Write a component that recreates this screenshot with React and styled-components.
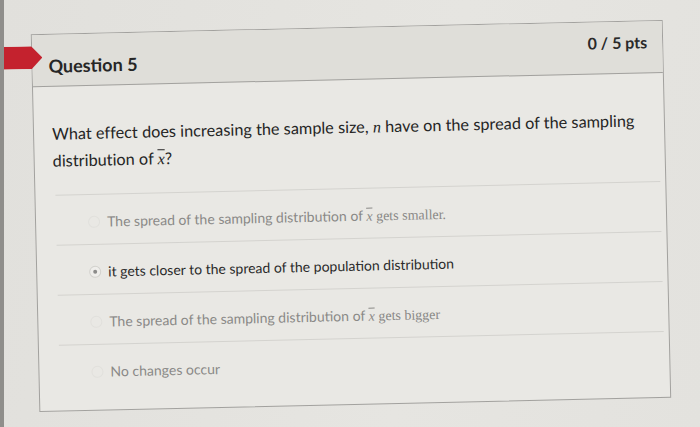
import React from 'react';
import styled, { createGlobalStyle } from 'styled-components';

const GlobalStyle = createGlobalStyle`
    html, body {
        margin: 0;
        padding: 0;
        background: #e3e2de;
        font-family: Lato, "Open Sans", sans-serif;
    }
`

const Screen = styled.div`
    position: relative;
    width: 700px;
    height: 427px;
    box-sizing: border-box;
    border-left: 4px solid #8f8e8b;
    background: linear-gradient(100deg, #e1e0dc 0%, #e6e5e1 60%, #e3e2de 100%);
    overflow: hidden;
    padding: 27px 0 0 31px;
`

const Card = styled.div`
    position: relative;
    width: 632px;
    height: 378px;
    box-sizing: border-box;
    border: 1px solid #a2a19e;
    background: #e9e8e4;
    transform: rotate(-1.3deg);
`

const Header = styled.div`
    display: flex;
    justify-content: space-between;
    align-items: flex-start;
    height: 52px;
    box-sizing: border-box;
    padding: 10px 15px 0 16px;
    background: #dfded9;
    border-bottom: 1px solid #a2a19e;
`

const Tag = styled.div`
    position: absolute;
    left: -44px;
    top: 11px;
    width: 54px;
    height: 23px;
    background: #c4222e;
    clip-path: polygon(0 0, 43px 0, 100% 50%, 43px 100%, 0 100%);
`

const Title = styled.div`
    margin-top: 10px;
    font-size: 18px;
    font-weight: 700;
    color: #262626;
    line-height: 22px;
`

const Points = styled.div`
    font-size: 16px;
    font-weight: 700;
    color: #2a2a2a;
    line-height: 22px;
`

const Body = styled.div`
    padding: 34px 5px 0 18px;
`

const QuestionText = styled.div`
    font-size: 16.2px;
    letter-spacing: 0.05px;
    line-height: 26px;
    color: #252525;
`

const Math = styled.span`
    font-family: "Liberation Serif", serif;
    font-style: ${p => (p.italic ? 'italic' : 'normal')};
`

const Bar = styled.span`
    text-decoration: overline;
    font-family: "Liberation Serif", serif;
    font-style: italic;
`

const AnswerList = styled.div`
    margin: 20px 0 0 2px;
`

const Answer = styled.div`
    display: flex;
    align-items: center;
    height: 50px;
    box-sizing: border-box;
    padding: 4px 0 0 32px;
    border-top: 1px solid #d4d3cf;
    font-size: 14px;
    color: ${p => (p.selected ? '#2a2a2a' : '#8a8987')};
`

const Radio = styled.span`
    position: relative;
    width: 12px;
    height: 12px;
    box-sizing: border-box;
    border-radius: 50%;
    margin-right: 7px;
    flex-shrink: 0;
    border: 1px solid ${p => (p.selected ? '#d2d1cd' : '#e1e0dc')};
    background: ${p => (p.selected ? '#efeeeb' : 'transparent')};

    &::after {
        content: '';
        display: ${p => (p.selected ? 'block' : 'none')};
        position: absolute;
        left: 3px;
        top: 3px;
        width: 4px;
        height: 4px;
        border-radius: 50%;
        background: #8c8c8a;
    }
`

const XBar = () => <Bar>x</Bar>

const answers = [
    { id: 1, text: 'The spread of the sampling distribution of ', math: ' gets smaller.' },
    { id: 2, text: 'it gets closer to the spread of the population distribution', selected: true },
    { id: 3, text: 'The spread of the sampling distribution of ', math: ' gets bigger' },
    { id: 4, text: 'No changes occur' },
]

const App = () => {
  return (
    <Screen>
        <GlobalStyle />
        <Card>
            <Tag />
            <Header>
                <Title>Question 5</Title>
                <Points>0 / 5 pts</Points>
            </Header>
            <Body>
                <QuestionText>
                    What effect does increasing the sample size, <Math italic>n</Math> have on the spread of the sampling distribution of <XBar />?
                </QuestionText>
                <AnswerList>
                    {answers.map(a => (
                        <Answer key={a.id} selected={a.selected}>
                            <Radio selected={a.selected} />
                            <span>
                                {a.text}
                                {a.math && <><XBar /><Math>{a.math}</Math></>}
                            </span>
                        </Answer>
                    ))}
                </AnswerList>
            </Body>
        </Card>
    </Screen>
  );
};

export default App;
